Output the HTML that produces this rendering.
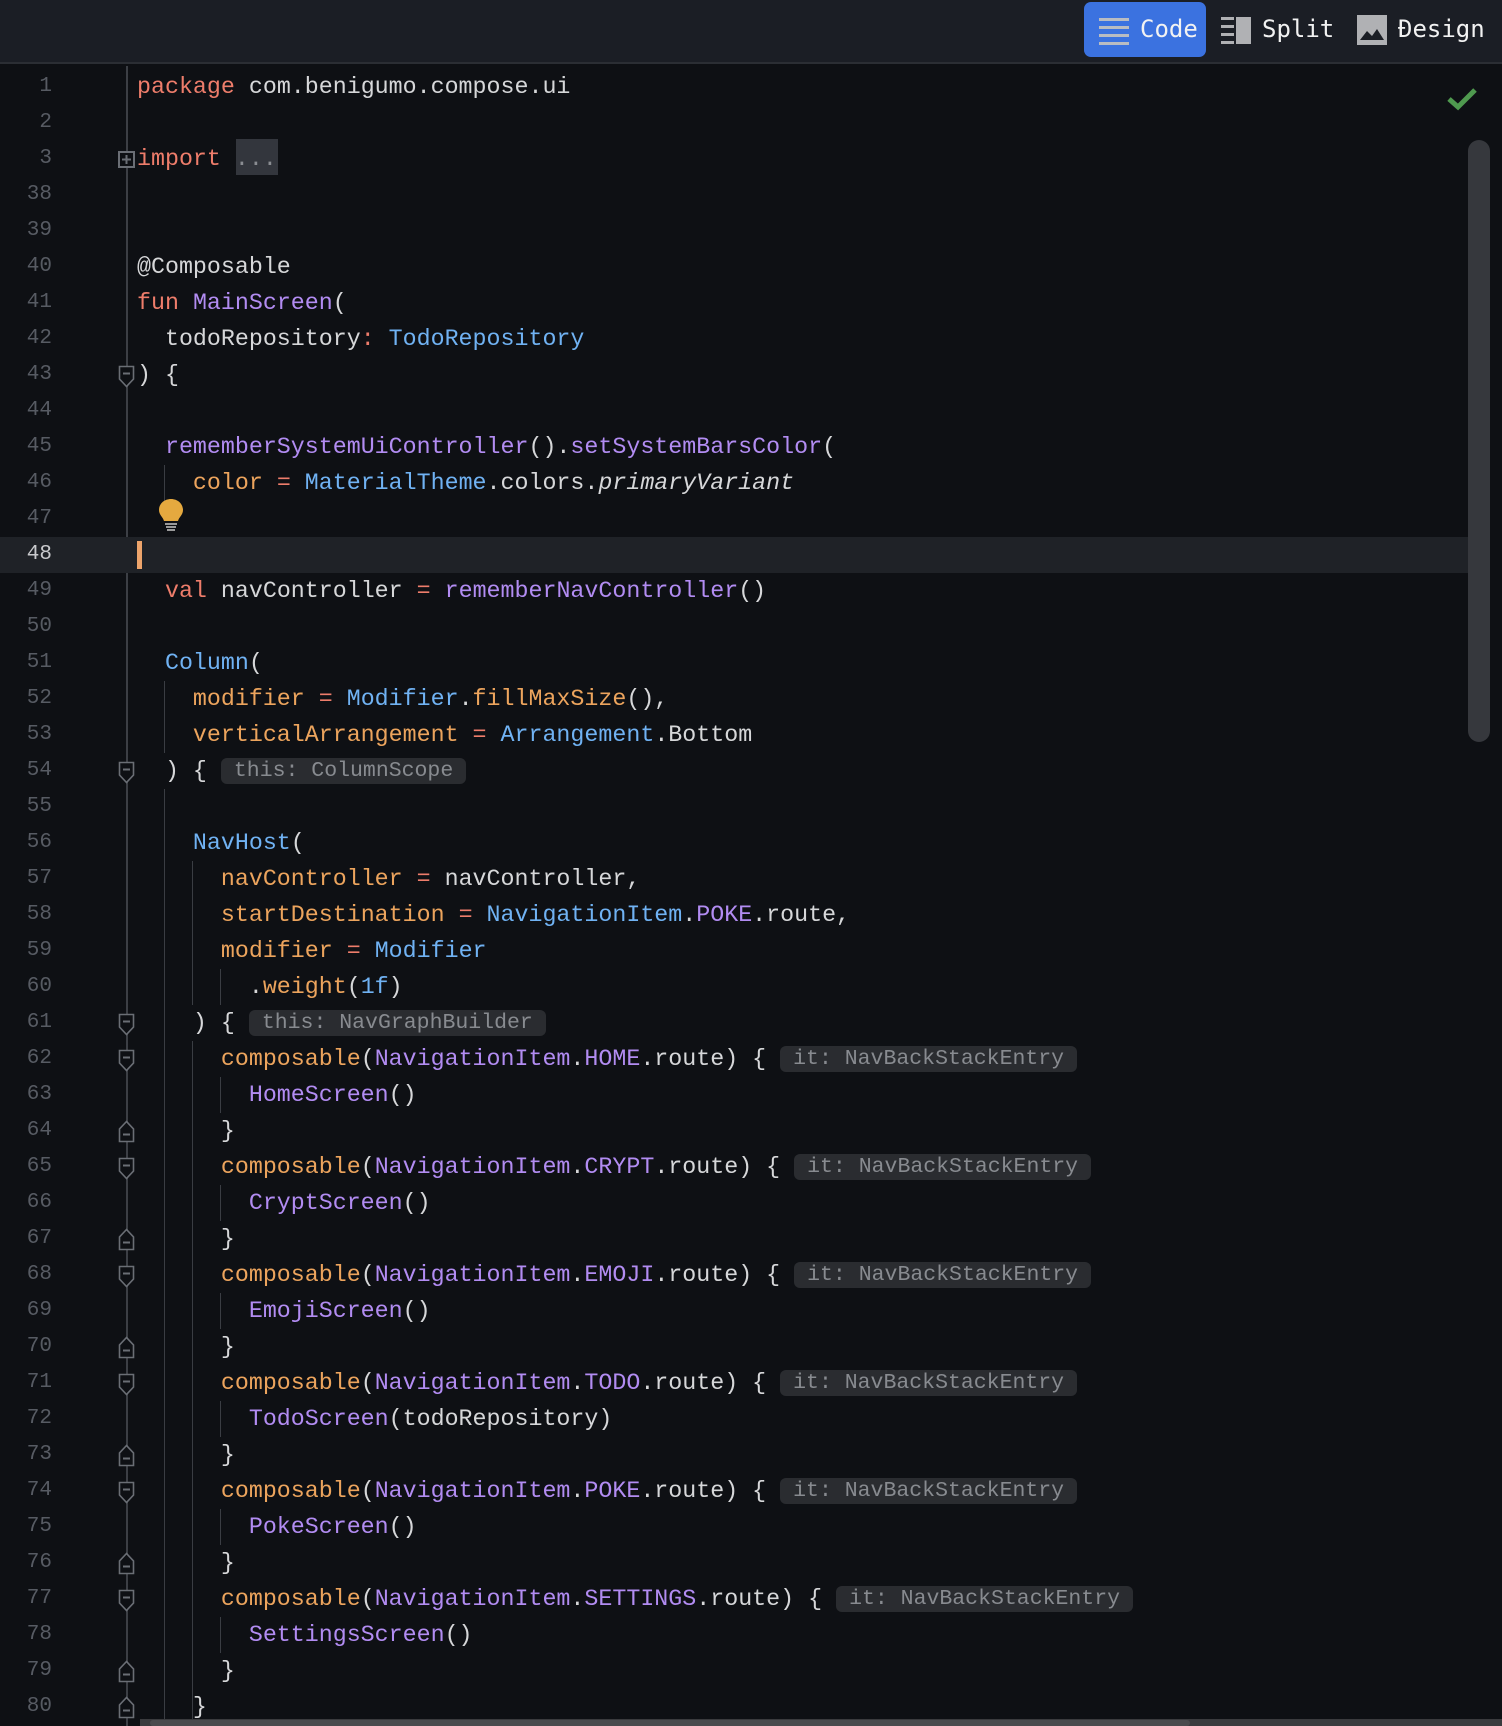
<!DOCTYPE html>
<html><head><meta charset="utf-8">
<style>
*{margin:0;padding:0;box-sizing:border-box}
html,body{width:1502px;height:1726px;overflow:hidden;background:#0e1014}
body{position:relative;font-family:"Liberation Mono",monospace;font-size:23.3px;color:#d6d7d9}
.hdr{position:absolute;left:0;top:0;width:1502px;height:64px;background:#1b1e25;border-bottom:2px solid #2b2e34}
.btn{position:absolute;top:2px;height:55px;font-family:"DejaVu Sans Mono","Liberation Mono",monospace;font-size:24px;color:#f2f2f2;line-height:55px}
.code{position:absolute;left:0;top:69px;width:1502px}
.r{position:relative;height:36px;line-height:36px;white-space:pre}
.n{position:absolute;left:0;width:52px;text-align:right;color:#575b63;font-size:21px}
.t{position:absolute;left:137px}
.k{color:#ee7d6b}.f{color:#b28cf2}.y{color:#70b2f3}.p{color:#eca45d}.i{font-style:italic}
.h{display:inline-block;background:#2a2c30;color:#888b90;border-radius:6px;line-height:26px;height:26px;padding:0 13px;font-size:21.5px;vertical-align:1px}
.g{position:absolute;width:1px;background:#3a3d43}
.fold{position:absolute;left:118px}
</style></head><body>
<div class="hdr">
  <div class="btn" style="left:1084px;width:122px;background:#3b72e0;border-radius:7px">
    <div style="position:absolute;left:15px;top:16px;width:30px;height:3px;background:#b9bcc2"></div>
    <div style="position:absolute;left:15px;top:24px;width:30px;height:3px;background:#b9bcc2"></div>
    <div style="position:absolute;left:15px;top:32px;width:30px;height:3px;background:#b9bcc2"></div>
    <div style="position:absolute;left:15px;top:40px;width:30px;height:3px;background:#b9bcc2"></div>
    <span style="position:absolute;left:56px;top:0">Code</span>
  </div>
  <div style="position:absolute;left:1221px;top:17px;width:13px;height:3px;background:#b0b1b4"></div>
  <div style="position:absolute;left:1221px;top:25px;width:13px;height:3px;background:#b0b1b4"></div>
  <div style="position:absolute;left:1221px;top:33px;width:13px;height:3px;background:#b0b1b4"></div>
  <div style="position:absolute;left:1221px;top:41px;width:13px;height:3px;background:#b0b1b4"></div>
  <div style="position:absolute;left:1236px;top:17px;width:15px;height:27px;background:#b0b1b4"></div>
  <div class="btn" style="left:1262px">Split</div>
  <svg style="position:absolute;left:1357px;top:15px" width="30" height="30" viewBox="0 0 30 30"><rect width="30" height="30" fill="#b0b1b4"/><path d="M3 25 L10 16 L15 21 L20 14 L27 25 Z" fill="#1b1e25"/></svg>
  <div class="btn" style="left:1398px">Đesign</div>
</div>

<div style="position:absolute;left:126px;top:66px;width:2px;height:1660px;background:#3c3f45"></div>
<div style="position:absolute;left:0;top:537px;width:1468px;height:36px;background:#1f2227"></div>
<div style="position:absolute;left:137px;top:541px;width:5px;height:28px;background:#eda46b"></div>

<div class="g" style="left:164px;top:465px;height:36px"></div>
<div class="g" style="left:164px;top:681px;height:72px"></div>
<div class="g" style="left:164px;top:789px;height:937px"></div>
<div class="g" style="left:192px;top:861px;height:144px"></div>
<div class="g" style="left:192px;top:1041px;height:684px"></div>
<div class="g" style="left:220px;top:969px;height:36px"></div>
<div class="g" style="left:220px;top:1077px;height:36px"></div>
<div class="g" style="left:220px;top:1185px;height:36px"></div>
<div class="g" style="left:220px;top:1293px;height:36px"></div>
<div class="g" style="left:220px;top:1401px;height:36px"></div>
<div class="g" style="left:220px;top:1509px;height:36px"></div>
<div class="g" style="left:220px;top:1617px;height:36px"></div>

<svg class="fold" style="top:151px" width="17" height="17"><rect x="1" y="1" width="15" height="15" fill="#0e1014" stroke="#6a6e75" stroke-width="2"/><path d="M4 8.5H13M8.5 4V13" stroke="#6a6e75" stroke-width="2"/></svg>
<svg class="fold" style="top:365px" width="17" height="23"><path d="M1.5 1.5H15.5V14L8.5 21.5L1.5 14Z" fill="#0e1014" stroke="#6a6e75" stroke-width="1.6"/><path d="M5 8.5H12" stroke="#6a6e75" stroke-width="2"/></svg>
<svg class="fold" style="top:761px" width="17" height="23"><path d="M1.5 1.5H15.5V14L8.5 21.5L1.5 14Z" fill="#0e1014" stroke="#6a6e75" stroke-width="1.6"/><path d="M5 8.5H12" stroke="#6a6e75" stroke-width="2"/></svg>
<svg class="fold" style="top:1013px" width="17" height="23"><path d="M1.5 1.5H15.5V14L8.5 21.5L1.5 14Z" fill="#0e1014" stroke="#6a6e75" stroke-width="1.6"/><path d="M5 8.5H12" stroke="#6a6e75" stroke-width="2"/></svg>
<svg class="fold" style="top:1049px" width="17" height="23"><path d="M1.5 1.5H15.5V14L8.5 21.5L1.5 14Z" fill="#0e1014" stroke="#6a6e75" stroke-width="1.6"/><path d="M5 8.5H12" stroke="#6a6e75" stroke-width="2"/></svg>
<svg class="fold" style="top:1157px" width="17" height="23"><path d="M1.5 1.5H15.5V14L8.5 21.5L1.5 14Z" fill="#0e1014" stroke="#6a6e75" stroke-width="1.6"/><path d="M5 8.5H12" stroke="#6a6e75" stroke-width="2"/></svg>
<svg class="fold" style="top:1265px" width="17" height="23"><path d="M1.5 1.5H15.5V14L8.5 21.5L1.5 14Z" fill="#0e1014" stroke="#6a6e75" stroke-width="1.6"/><path d="M5 8.5H12" stroke="#6a6e75" stroke-width="2"/></svg>
<svg class="fold" style="top:1373px" width="17" height="23"><path d="M1.5 1.5H15.5V14L8.5 21.5L1.5 14Z" fill="#0e1014" stroke="#6a6e75" stroke-width="1.6"/><path d="M5 8.5H12" stroke="#6a6e75" stroke-width="2"/></svg>
<svg class="fold" style="top:1481px" width="17" height="23"><path d="M1.5 1.5H15.5V14L8.5 21.5L1.5 14Z" fill="#0e1014" stroke="#6a6e75" stroke-width="1.6"/><path d="M5 8.5H12" stroke="#6a6e75" stroke-width="2"/></svg>
<svg class="fold" style="top:1589px" width="17" height="23"><path d="M1.5 1.5H15.5V14L8.5 21.5L1.5 14Z" fill="#0e1014" stroke="#6a6e75" stroke-width="1.6"/><path d="M5 8.5H12" stroke="#6a6e75" stroke-width="2"/></svg>
<svg class="fold" style="top:1120px" width="17" height="23"><path d="M1.5 21.5H15.5V9L8.5 1.5L1.5 9Z" fill="#0e1014" stroke="#6a6e75" stroke-width="1.6"/><path d="M5 14.5H12" stroke="#6a6e75" stroke-width="2"/></svg>
<svg class="fold" style="top:1228px" width="17" height="23"><path d="M1.5 21.5H15.5V9L8.5 1.5L1.5 9Z" fill="#0e1014" stroke="#6a6e75" stroke-width="1.6"/><path d="M5 14.5H12" stroke="#6a6e75" stroke-width="2"/></svg>
<svg class="fold" style="top:1336px" width="17" height="23"><path d="M1.5 21.5H15.5V9L8.5 1.5L1.5 9Z" fill="#0e1014" stroke="#6a6e75" stroke-width="1.6"/><path d="M5 14.5H12" stroke="#6a6e75" stroke-width="2"/></svg>
<svg class="fold" style="top:1444px" width="17" height="23"><path d="M1.5 21.5H15.5V9L8.5 1.5L1.5 9Z" fill="#0e1014" stroke="#6a6e75" stroke-width="1.6"/><path d="M5 14.5H12" stroke="#6a6e75" stroke-width="2"/></svg>
<svg class="fold" style="top:1552px" width="17" height="23"><path d="M1.5 21.5H15.5V9L8.5 1.5L1.5 9Z" fill="#0e1014" stroke="#6a6e75" stroke-width="1.6"/><path d="M5 14.5H12" stroke="#6a6e75" stroke-width="2"/></svg>
<svg class="fold" style="top:1660px" width="17" height="23"><path d="M1.5 21.5H15.5V9L8.5 1.5L1.5 9Z" fill="#0e1014" stroke="#6a6e75" stroke-width="1.6"/><path d="M5 14.5H12" stroke="#6a6e75" stroke-width="2"/></svg>
<svg class="fold" style="top:1696px" width="17" height="23"><path d="M1.5 21.5H15.5V9L8.5 1.5L1.5 9Z" fill="#0e1014" stroke="#6a6e75" stroke-width="1.6"/><path d="M5 14.5H12" stroke="#6a6e75" stroke-width="2"/></svg>

<div style="position:absolute;left:236px;top:139px;width:42px;height:36px;background:#33363d"></div>

<svg style="position:absolute;left:157px;top:497px" width="28" height="36" viewBox="0 0 28 36"><path d="M14 2C7 2 2 7 2 13C2 18 6 20 7 24H21C22 20 26 18 26 13C26 7 21 2 14 2Z" fill="#e5a93f"/><path d="M8 27H20M9 30H19M10 33H18" stroke="#9a9a9a" stroke-width="2"/></svg>

<svg style="position:absolute;left:1447px;top:87px" width="30" height="24" viewBox="0 0 30 24"><path d="M2 12L11 20L28 3" fill="none" stroke="#4f9a4f" stroke-width="5"/></svg>

<div style="position:absolute;left:1468px;top:140px;width:22px;height:602px;background:#36383d;border-radius:11px"></div>
<div style="position:absolute;left:140px;top:1719px;width:1362px;height:7px;background:#3a3b3e"></div>
<div style="position:absolute;left:150px;top:1720px;width:1040px;height:6px;background:#4a4b4e;border-radius:3px"></div>

<div class="code">
<div class="r"><span class="n">1</span><span class="t"><span class="k">package</span> com.benigumo.compose.ui</span></div>
<div class="r"><span class="n">2</span></div>
<div class="r"><span class="n">3</span><span class="t"><span class="k">import</span> <span style="color:#8a8d92">...</span></span></div>
<div class="r"><span class="n">38</span></div>
<div class="r"><span class="n">39</span></div>
<div class="r"><span class="n">40</span><span class="t">@Composable</span></div>
<div class="r"><span class="n">41</span><span class="t"><span class="k">fun</span> <span class="f">MainScreen</span>(</span></div>
<div class="r"><span class="n">42</span><span class="t">  todoRepository<span class="k">:</span> <span class="y">TodoRepository</span></span></div>
<div class="r"><span class="n">43</span><span class="t">) {</span></div>
<div class="r"><span class="n">44</span></div>
<div class="r"><span class="n">45</span><span class="t">  <span class="f">rememberSystemUiController</span>().<span class="f">setSystemBarsColor</span>(</span></div>
<div class="r"><span class="n">46</span><span class="t">    <span class="p">color</span> <span class="k">=</span> <span class="y">MaterialTheme</span>.colors.<span class="i">primaryVariant</span></span></div>
<div class="r"><span class="n">47</span></div>
<div class="r"><span class="n" style="color:#c8c9cc">48</span></div>
<div class="r"><span class="n">49</span><span class="t">  <span class="k">val</span> navController <span class="k">=</span> <span class="f">rememberNavController</span>()</span></div>
<div class="r"><span class="n">50</span></div>
<div class="r"><span class="n">51</span><span class="t">  <span class="y">Column</span>(</span></div>
<div class="r"><span class="n">52</span><span class="t">    <span class="p">modifier</span> <span class="k">=</span> <span class="y">Modifier</span>.<span class="p">fillMaxSize</span>(),</span></div>
<div class="r"><span class="n">53</span><span class="t">    <span class="p">verticalArrangement</span> <span class="k">=</span> <span class="y">Arrangement</span>.Bottom</span></div>
<div class="r"><span class="n">54</span><span class="t">  ) { <span class="h">this: ColumnScope</span></span></div>
<div class="r"><span class="n">55</span></div>
<div class="r"><span class="n">56</span><span class="t">    <span class="y">NavHost</span>(</span></div>
<div class="r"><span class="n">57</span><span class="t">      <span class="p">navController</span> <span class="k">=</span> navController,</span></div>
<div class="r"><span class="n">58</span><span class="t">      <span class="p">startDestination</span> <span class="k">=</span> <span class="y">NavigationItem</span>.<span class="f">POKE</span>.route,</span></div>
<div class="r"><span class="n">59</span><span class="t">      <span class="p">modifier</span> <span class="k">=</span> <span class="y">Modifier</span></span></div>
<div class="r"><span class="n">60</span><span class="t">        .<span class="p">weight</span>(<span class="y">1f</span>)</span></div>
<div class="r"><span class="n">61</span><span class="t">    ) { <span class="h">this: NavGraphBuilder</span></span></div>
<div class="r"><span class="n">62</span><span class="t">      <span class="p">composable</span>(<span class="f">NavigationItem</span>.<span class="f">HOME</span>.route) { <span class="h">it: NavBackStackEntry</span></span></div>
<div class="r"><span class="n">63</span><span class="t">        <span class="f">HomeScreen</span>()</span></div>
<div class="r"><span class="n">64</span><span class="t">      }</span></div>
<div class="r"><span class="n">65</span><span class="t">      <span class="p">composable</span>(<span class="f">NavigationItem</span>.<span class="f">CRYPT</span>.route) { <span class="h">it: NavBackStackEntry</span></span></div>
<div class="r"><span class="n">66</span><span class="t">        <span class="f">CryptScreen</span>()</span></div>
<div class="r"><span class="n">67</span><span class="t">      }</span></div>
<div class="r"><span class="n">68</span><span class="t">      <span class="p">composable</span>(<span class="f">NavigationItem</span>.<span class="f">EMOJI</span>.route) { <span class="h">it: NavBackStackEntry</span></span></div>
<div class="r"><span class="n">69</span><span class="t">        <span class="f">EmojiScreen</span>()</span></div>
<div class="r"><span class="n">70</span><span class="t">      }</span></div>
<div class="r"><span class="n">71</span><span class="t">      <span class="p">composable</span>(<span class="f">NavigationItem</span>.<span class="f">TODO</span>.route) { <span class="h">it: NavBackStackEntry</span></span></div>
<div class="r"><span class="n">72</span><span class="t">        <span class="f">TodoScreen</span>(todoRepository)</span></div>
<div class="r"><span class="n">73</span><span class="t">      }</span></div>
<div class="r"><span class="n">74</span><span class="t">      <span class="p">composable</span>(<span class="f">NavigationItem</span>.<span class="f">POKE</span>.route) { <span class="h">it: NavBackStackEntry</span></span></div>
<div class="r"><span class="n">75</span><span class="t">        <span class="f">PokeScreen</span>()</span></div>
<div class="r"><span class="n">76</span><span class="t">      }</span></div>
<div class="r"><span class="n">77</span><span class="t">      <span class="p">composable</span>(<span class="f">NavigationItem</span>.<span class="f">SETTINGS</span>.route) { <span class="h">it: NavBackStackEntry</span></span></div>
<div class="r"><span class="n">78</span><span class="t">        <span class="f">SettingsScreen</span>()</span></div>
<div class="r"><span class="n">79</span><span class="t">      }</span></div>
<div class="r"><span class="n">80</span><span class="t">    }</span></div>
</div>
</body></html>
